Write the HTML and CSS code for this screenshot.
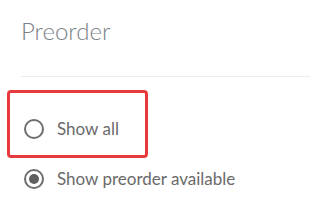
FILE: index.html
```html
<!DOCTYPE html>
<html lang="en">

<head>
    <meta charset="UTF-8">
    <meta name="viewport" content="width=device-width, initial-scale=1.0">
    <title>Preorder</title>
    <link rel="stylesheet" href="styles.css">
</head>

<body>
    <div class="panel">
        <h3 class="title">Preorder</h3>
        <div class="divider"></div>
        <div class="options">
            <label class="option marked">
                <span class="radio"></span>
                <span class="text">Show all</span>
            </label>
            <label class="option">
                <span class="radio checked"></span>
                <span class="text">Show preorder available</span>
            </label>
        </div>
    </div>
</body>

</html>
```

FILE: styles.css
```css
body {
    margin: 0;
    background: #fff;
    font-family: Lato, "Noto Sans", sans-serif;
}

.panel {
    padding: 0 23px 0 21px;
}

.title {
    margin: 0;
    padding-top: 14px;
    font-size: 24px;
    line-height: 34px;
    font-weight: 300;
    color: #7a7f88;
}

.divider {
    margin-top: 28px;
    height: 1px;
    background: #ececec;
}

.options {
    display: flex;
    flex-direction: column;
    align-items: flex-start;
    padding-left: 3px;
    margin-top: 13px;
}

.option {
    display: flex;
    align-items: center;
    gap: 13px;
    font-size: 17px;
    color: #6a6a6a;
}

/* red annotation frame */
.marked {
    box-sizing: border-box;
    width: 141px;
    margin-left: -17px;
    padding: 25px 0 16px 14px;
    border: 3px solid #e8393d;
    border-radius: 4px;
    margin-bottom: 10px;
}

.radio {
    width: 20px;
    height: 20px;
    box-sizing: border-box;
    border: 2px solid #6f6f6f;
    border-radius: 50%;
    position: relative;
}

.radio.checked::after {
    content: '';
    position: absolute;
    left: 3px;
    top: 3px;
    width: 10px;
    height: 10px;
    border-radius: 50%;
    background: #5f5f5f;
}
```
